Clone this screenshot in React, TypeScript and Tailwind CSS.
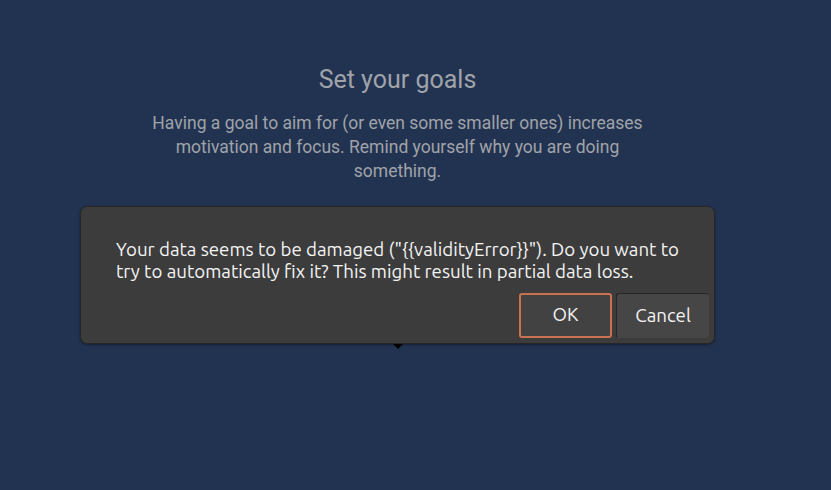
import React from "react";

export default function App() {
  return (
    <div className="w-[831px] h-[490px] bg-[#223352] overflow-hidden relative" style={{ fontFamily: "Roboto, sans-serif" }}>
      <div className="w-[795px] flex flex-col items-center pt-[66px]">
        <h1 className="text-[25px] leading-[28px] text-[#a0a3a8] font-normal">Set your goals</h1>
        <p className="mt-[17px] w-[500px] text-center text-[17.5px] leading-[24px] text-[#a0a3a8]">
          Having a goal to aim for (or even some smaller ones) increases motivation and focus. Remind yourself why you are doing something.
        </p>
        <div className="mt-[23px] w-[635px] relative">
          <div
            className="w-full rounded-[7px] border border-[#262626] bg-[#3c3c3c] shadow-[0_1px_3px_rgba(0,0,0,0.4)] flex flex-col"
            style={{ fontFamily: "Ubuntu, 'Open Sans', 'Noto Sans', sans-serif" }}
          >
            <div className="pl-[35px] pr-[10px] pt-[32px] text-[18.7px] leading-[22px] text-[#f4f4f4]">
              Your data seems to be damaged ("{"{{"}validityError{"}}"}"). Do you want to
              <br />
              try to automatically fix it? This might result in partial data loss.
            </div>
            <div className="flex justify-end gap-[4px] pr-[5px] pb-[5px] mt-[10px]">
              <button className="w-[93px] h-[45px] rounded-[3px] border-2 border-solid border-[color:#c8724f] bg-[#424242] text-[18.7px] text-[#f4f4f4]">OK</button>
              <button className="w-[93px] h-[45px] rounded-[3px] border-t border-l border-t-[#262626] border-l-[#262626] bg-[#464646] text-[18.7px] text-[#f4f4f4]">Cancel</button>
            </div>
          </div>
          <div className="absolute left-1/2 -translate-x-1/2 -bottom-[5px] w-0 h-0 border-l-[5px] border-r-[5px] border-t-[5px] border-l-transparent border-r-transparent border-t-black" />
        </div>
      </div>
    </div>
  );
}
